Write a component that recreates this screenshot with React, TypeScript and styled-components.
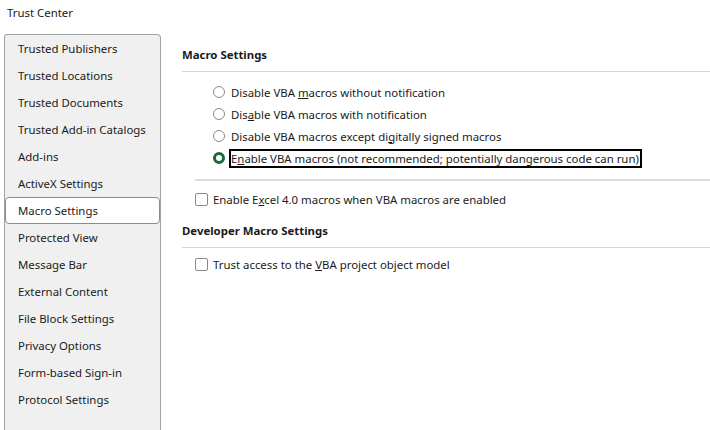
import React from "react";
import styled, { createGlobalStyle } from "styled-components";

const Global = createGlobalStyle`
  html, body { margin: 0; padding: 0; background: #ffffff; }
  body { font-family: "Noto Sans", "Open Sans", sans-serif; font-size: 11.4px; color: #1a1a1a; overflow: hidden; }
`;

const Page = styled.div`
  width: 710px;
  height: 430px;
  display: flex;
  flex-direction: column;
  overflow: hidden;
`;

const Title = styled.div`
  height: 24px;
  line-height: 24px;
  padding-top: 1px;
  padding-left: 7px;
`;

const Body = styled.div`
  display: flex;
  flex: 1;
  margin-top: 9px;
`;

const Sidebar = styled.nav`
  width: 155px;
  margin-left: 4px;
  background: #f0f0f0;
  border: 1px solid #a3a3a3;
  border-bottom: none;
  border-radius: 3px 4px 0 0;
  flex: none;
  height: 410px;
`;

const NavItem = styled.div<{ $selected?: boolean }>`
  height: 27px;
  box-sizing: border-box;
  display: flex;
  align-items: center;
  background: ${(p) => (p.$selected ? "#ffffff" : "transparent")};
  border: 1px solid ${(p) => (p.$selected ? "#8c8c8c" : "transparent")};
  border-radius: 4px;
  padding-left: 12px;
`;

const Content = styled.div`
  flex: 1;
  margin-left: 21px;
  display: flex;
  flex-direction: column;
`;

const Heading = styled.div<{ $top: number }>`
  font-weight: 700;
  height: 22px;
  line-height: 22px;
  margin-top: ${(p) => p.$top}px;
`;

const Rule = styled.div`
  height: 1px;
  background: #d6d6d6;
  margin-top: 5px;
`;

const Options = styled.div`
  display: flex;
  flex-direction: column;
  padding-left: 31px;
  margin-top: 9px;
`;

const OptionRow = styled.label`
  display: flex;
  align-items: center;
  height: 22px;
  gap: 4px;
`;

const Radio = styled.span<{ $checked?: boolean }>`
  width: 12px;
  height: 12px;
  box-sizing: border-box;
  border-radius: 50%;
  flex: none;
  background: #ffffff;
  border: ${(p) => (p.$checked ? "3.5px solid #1b6b3a" : "1px solid #8a8a8a")};
`;

const OptionText = styled.span<{ $focused?: boolean }>`
  border: 2px solid ${(p) => (p.$focused ? "#000" : "transparent")};
  padding-right: 1px;
  line-height: 15px;
`;

const ThickRule = styled.div`
  height: 2px;
  background: #dcdcdc;
  margin-left: 13px;
  margin-top: 10px;
`;

const CheckRow = styled.label<{ $top: number }>`
  display: flex;
  align-items: center;
  gap: 5px;
  padding-left: 13px;
  height: 20px;
  margin-top: ${(p) => p.$top}px;
`;

const Box = styled.span`
  width: 13px;
  height: 13px;
  box-sizing: border-box;
  border: 1px solid #8a8a8a;
  border-radius: 2px;
  background: #ffffff;
  flex: none;
`;

const navItems = [
  "Trusted Publishers",
  "Trusted Locations",
  "Trusted Documents",
  "Trusted Add-in Catalogs",
  "Add-ins",
  "ActiveX Settings",
  "Macro Settings",
  "Protected View",
  "Message Bar",
  "External Content",
  "File Block Settings",
  "Privacy Options",
  "Form-based Sign-in",
  "Protocol Settings",
];

export default function App() {
  return (
    <Page>
      <Global />
      <Title>Trust Center</Title>
      <Body>
        <Sidebar>
          {navItems.map((n) => (
            <NavItem key={n} $selected={n === "Macro Settings"}>
              {n}
            </NavItem>
          ))}
        </Sidebar>
        <Content>
          <Heading $top={10}>Macro Settings</Heading>
          <Rule />
          <Options>
            <OptionRow>
              <Radio />
              <OptionText>
                Disable VBA <u>m</u>acros without notification
              </OptionText>
            </OptionRow>
            <OptionRow>
              <Radio />
              <OptionText>
                Dis<u>a</u>ble VBA macros with notification
              </OptionText>
            </OptionRow>
            <OptionRow>
              <Radio />
              <OptionText>
                Disable VBA macros except di<u>g</u>itally signed macros
              </OptionText>
            </OptionRow>
            <OptionRow>
              <Radio $checked />
              <OptionText $focused>
                E<u>n</u>able VBA macros (not recommended; potentially dangerous code can run)
              </OptionText>
            </OptionRow>
          </Options>
          <ThickRule />
          <CheckRow $top={8}>
            <Box />
            <span>
              Enable E<u>x</u>cel 4.0 macros when VBA macros are enabled
            </span>
          </CheckRow>
          <Heading $top={11}>Developer Macro Settings</Heading>
          <Rule />
          <CheckRow $top={6}>
            <Box />
            <span>
              Trust access to the <u>V</u>BA project object model
            </span>
          </CheckRow>
        </Content>
      </Body>
    </Page>
  );
}
